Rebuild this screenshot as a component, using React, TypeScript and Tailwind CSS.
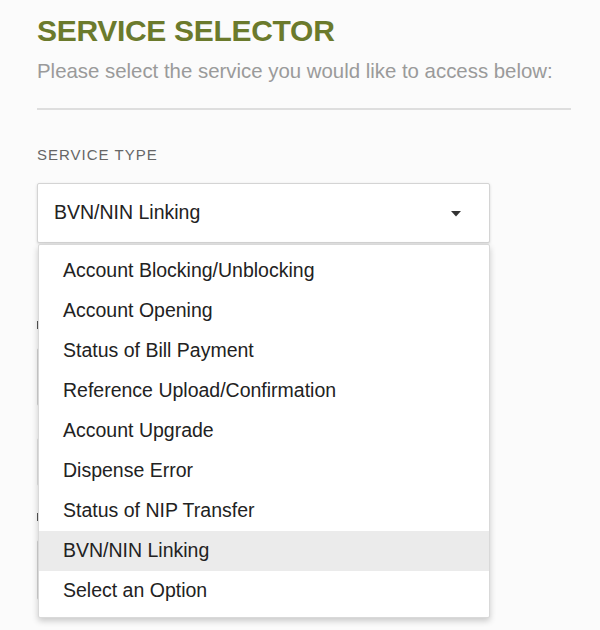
import React from "react";

const options = [
  "Account Blocking/Unblocking",
  "Account Opening",
  "Status of Bill Payment",
  "Reference Upload/Confirmation",
  "Account Upgrade",
  "Dispense Error",
  "Status of NIP Transfer",
  "BVN/NIN Linking",
  "Select an Option",
];

export default function App() {
  return (
    <div
      className="min-h-[630px] w-[600px] overflow-hidden bg-[#fbfbfb] pl-[37px] pr-[29px]"
      style={{ fontFamily: '"Liberation Sans", Arial, sans-serif' }}
    >
      <h1 className="pt-[14px] text-[30px] font-bold leading-[34px] tracking-[-0.3px] text-[#6b7a2c]">
        SERVICE SELECTOR
      </h1>
      <p className="mt-[11px] text-[20.4px] leading-[24px] text-[#9a9a9a]">
        Please select the service you would like to access below:
      </p>
      <div className="mt-[25px] h-[2px] w-[534px] bg-[#dedede]" />
      <div className="mt-[36px] text-[15px] leading-[18px] tracking-[1px] text-[#666]">
        SERVICE TYPE
      </div>
      <div className="relative mt-[19px] w-[453px]">
        <div className="flex h-[60px] items-center justify-between rounded-[2px] border border-[#d4d4d4] bg-white pl-[16px] pr-[28px] shadow-[0_1px_3px_rgba(0,0,0,0.15)]">
          <span className="text-[19.5px] text-[#222]">BVN/NIN Linking</span>
          <svg width="10" height="6" viewBox="0 0 10 6" className="mt-[1px]">
            <path d="M0 0 L10 0 L5 5.5 Z" fill="#333" />
          </svg>
        </div>

        {/* underlying form fields, hidden under the open menu */}
        <div className="mt-[75px] h-[18px] pt-[3px]">
          <div className="h-[8px] w-[3px] bg-[#555]" />
        </div>
        <div className="mt-[12px] h-[58px] rounded-[2px] border border-[#d4d4d4] bg-white" />
        <div className="mt-[32px] h-[48px] rounded-[2px] border border-[#e2e2e2] bg-white" />
        <div className="mt-[24px] h-[18px] pt-[3px]">
          <div className="h-[8px] w-[3px] bg-[#555]" />
        </div>
        <div className="mt-[12px] h-[60px] rounded-[2px] border border-[#d4d4d4] bg-white" />

        <div className="absolute left-[1px] right-0 top-[61px] z-10 rounded-[2px] border border-[#d9d9d9] bg-white py-[6px] shadow-[0_3px_6px_rgba(0,0,0,0.2)]">
          {options.map((o) => (
            <div
              key={o}
              className={
                "flex h-[40px] items-center pl-[24px] text-[19.5px] text-[#222] " +
                (o === "BVN/NIN Linking" ? "bg-[#ebebeb]" : "")
              }
            >
              {o}
            </div>
          ))}
        </div>
      </div>
    </div>
  );
}
